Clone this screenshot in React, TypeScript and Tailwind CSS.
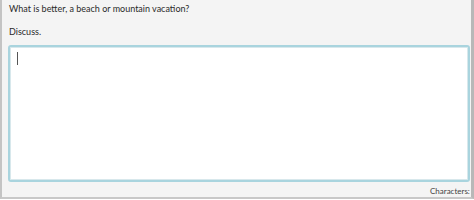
import React from "react";

export default function App() {
  return (
    <div className="w-[474px] h-[200px] bg-white overflow-hidden" style={{ fontFamily: "Lato, 'Open Sans', sans-serif" }}>
      <div className="h-[199px] bg-[#f4f4f4] border-l-2 border-r-[3px] border-b-2 border-l-[#c4c4c4] border-r-[#b8b8b8] border-b-[#c8c8c8] flex flex-col">
        <div className="pl-[7px] pt-[2px] text-[9px] leading-[14px] text-[#2a2a2a]">What is better, a beach or mountain vacation?</div>
        <div className="pl-[7px] pt-[9px] text-[9px] leading-[14px] text-[#2a2a2a]">Discuss.</div>
        <div className="ml-[6px] mr-[1px] mt-[6px] h-[139px] bg-white border-2 border-[#a9d4de] rounded-[3px] shadow-[inset_0_0_0_1px_#d8e8ec] relative">
          <div className="absolute left-[7px] top-[5px] w-px h-[13px] bg-[#555]" />
        </div>
        <div className="pl-[428px] pt-[3px] text-[8px] leading-[12px] text-[#444] whitespace-nowrap overflow-hidden">
          Characters: 0
        </div>
      </div>
    </div>
  );
}
